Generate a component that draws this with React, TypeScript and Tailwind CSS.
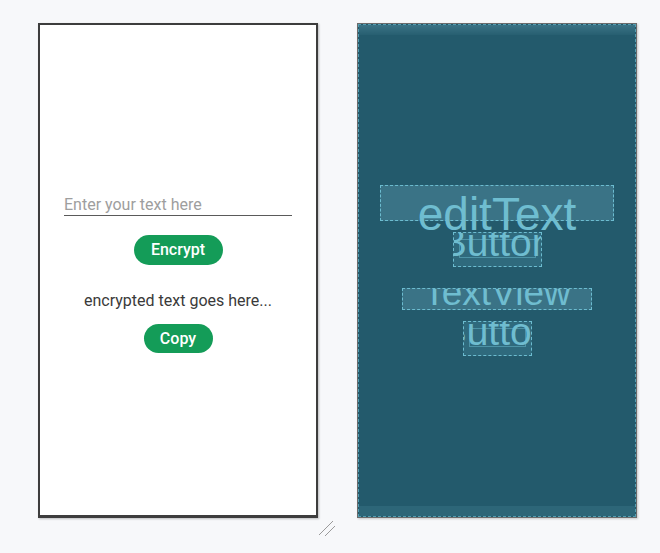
import React from "react";

const roboto = { fontFamily: "Roboto, 'Noto Sans', sans-serif" };

function DesignView() {
  return (
    <div
      className="w-[280px] h-[495px] shrink-0 bg-white border-2 border-b-[3px] border-[#3d3d3d] shadow-[1px_1px_2px_rgba(0,0,0,0.25)] flex flex-col items-center"
      style={roboto}
    >
      {/* editText */}
      <div className="mt-[170px] w-[228px] border-b border-[#5a5a5a] text-[16px] leading-[20px] text-[#9e9e9e]">
        Enter your text here
      </div>

      <button className="mt-[19px] w-[89px] h-[30px] rounded-full bg-[#149c58] text-white text-[16px] font-medium leading-none">
        Encrypt
      </button>

      <p className="mt-[26px] text-[16px] leading-[20px] text-[#3a3a3a]">encrypted text goes here...</p>

      <button className="mt-[13px] w-[69px] h-[29px] rounded-full bg-[#149c58] text-white text-[16px] font-medium leading-none">
        Copy
      </button>
    </div>
  );
}

function BlueButton({ width, mt }: { width: string; mt: string }) {
  return (
    <div
      className={`${width} ${mt} h-[35px] relative overflow-hidden border border-dashed border-[#6cbcd0] bg-[#2f6a7d] flex justify-center items-start`}
    >
      <span className="shrink-0 whitespace-nowrap text-[39px] leading-[19px] text-[#6fbdd0]">Button</span>
      <div className="absolute left-[5px] right-[5px] top-[6px] bottom-[8px] border border-[#6cbcd0]/50" />
    </div>
  );
}

function BlueprintView() {
  return (
    <div
      className="w-[280px] h-[495px] shrink-0 border border-[#6b6b6b] bg-[#235a6c] shadow-[1px_1px_2px_rgba(0,0,0,0.2)]"
      style={{ fontFamily: "'Liberation Sans', Arial, sans-serif" }}
    >
      <div className="h-full border border-dashed border-[#5fb0c4]/80 flex flex-col items-center">
        <div className="self-stretch h-[10px] bg-gradient-to-b from-[#3b7385] to-[#275f71]" />

        {/* editText */}
        <div className="mt-[150px] w-[234px] h-[36px] border border-dashed border-[#6cbcd0] bg-[#3a7386] flex justify-center items-start">
          <span className="shrink-0 whitespace-nowrap text-[46px] leading-[56px] text-[#6fbdd0]">editText</span>
        </div>

        <BlueButton width="w-[89px]" mt="mt-[11px]" />

        {/* TextView */}
        <div className="mt-[21px] w-[190px] h-[22px] overflow-hidden border border-dashed border-[#6cbcd0] bg-[#3a7386] flex justify-center items-start">
          <span className="shrink-0 whitespace-nowrap text-[37px] leading-[8px] text-[#6fbdd0]">TextView</span>
        </div>

        <BlueButton width="w-[69px]" mt="mt-[11px]" />

        <div className="mt-auto self-stretch h-[10px] bg-[#2d6678]" />
      </div>
    </div>
  );
}

export default function App() {
  return (
    <div className="w-[660px] h-[553px] bg-[#f7f8fa] relative flex items-start gap-[39px] pl-[38px] pt-[23px] overflow-hidden">
      <DesignView />
      <BlueprintView />

      {/* resize handle */}
      <svg className="absolute left-[318px] top-[519px]" width="18" height="18" viewBox="0 0 18 18">
        <line x1="1" y1="16" x2="15" y2="2" stroke="#9a9a9a" strokeWidth="1" />
        <line x1="7" y1="17" x2="17" y2="7" stroke="#9a9a9a" strokeWidth="1" />
      </svg>
    </div>
  );
}
